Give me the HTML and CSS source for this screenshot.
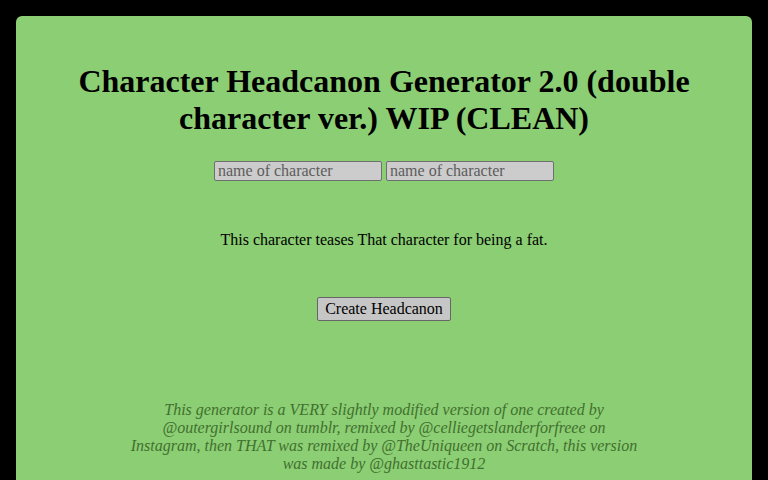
FILE: index.html
```html
<!DOCTYPE html>
<html lang="en">

<head>
    <meta charset="UTF-8">
    <meta name="viewport" content="width=device-width, initial-scale=1.0">
    <link rel="stylesheet" href="styles.css">
</head>

<body>
    <div class="generator">
        <h1 class="title">Character Headcanon Generator 2.0 (double character ver.) WIP (CLEAN)</h1>
        <div class="names">
            <input type="text" placeholder="name of character" class="name-input">
            <input type="text" placeholder="name of character" class="name-input">
        </div>
        <p class="result">This character teases That character for being a fat.</p>
        <button class="create-btn">Create Headcanon</button>
        <p class="credits">This generator is a VERY slightly modified version of one created by
            @outergirlsound on tumblr, remixed by @celliegetslanderforfreee on Instagram, then THAT was remixed by
            @TheUniqueen on Scratch, this version was made by @ghasttastic1912</p>
    </div>
</body>

</html>
```

FILE: styles.css
```css
:root {
    --card-color: #8bce73;
    --credit-color: #42702f;
    --field-color: #cccccc;
}

* {
    box-sizing: border-box;
}

body {
    margin: 0;
    padding: 16px;
    background: #000;
    font-family: "Liberation Serif", "Times New Roman", serif;
    color: #000;
}

.generator {
    background: var(--card-color);
    border-radius: 6px;
    padding: 26px 40px 40px;
    text-align: center;
}

.title {
    font-size: 32px;
    margin: 21px 0 24px;
}

.names {
    display: flex;
    justify-content: center;
    gap: 4px;
}

.name-input {
    width: 168px;
    height: 20px;
    padding: 0 3px;
    font-family: inherit;
    font-size: 16px;
    background: var(--field-color);
    border: 1px solid #6f6f6f;
    border-radius: 2px;
}

.name-input::placeholder {
    color: #5c5c5c;
}

.result {
    font-size: 16px;
    margin: 50px 0 48px;
}

.create-btn {
    font-family: inherit;
    font-size: 16px;
    padding: 2px 7px;
    background: #c6c6c6;
    border: 1px solid #666;
    border-radius: 2px;
    color: #000;
}

.credits {
    font-style: italic;
    font-size: 16px;
    line-height: 18px;
    color: var(--credit-color);
    max-width: 512px;
    margin: 80px auto 0;
}
```
